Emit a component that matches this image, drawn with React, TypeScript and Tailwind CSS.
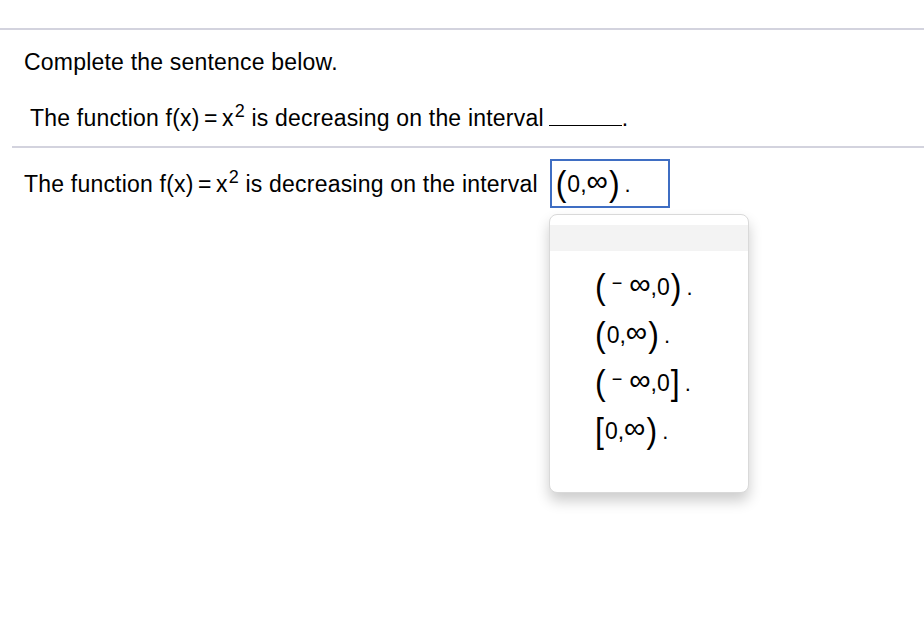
import React from 'react'

function Interval({ left, right, neg }: { left: string; right: string; neg?: boolean }) {
  const zero = <span className="text-[23px] leading-none inline-block">0</span>
  const comma = <span className="text-[23px] leading-none inline-block">,</span>
  const inf = <span className="text-[30px] leading-none inline-block -translate-y-[1px] tracking-normal">∞</span>
  return (
    <span className="inline-flex items-center text-black tracking-normal" style={{ fontFamily: '"Liberation Sans", Arial, sans-serif' }}>
      <span className="text-[32px] font-light leading-none scale-y-110 inline-block">{left}</span>
      {neg && <span className="text-[18px] leading-none -translate-y-[4px] ml-[6px] mr-[6px] inline-block">−</span>}
      <span className="inline-flex items-baseline -translate-y-[2px] ml-[1px]">
        {neg ? (
          <>
            {inf}
            {comma}
            {zero}
          </>
        ) : (
          <>
            {zero}
            {comma}
            {inf}
          </>
        )}
      </span>
      <span className="text-[32px] font-light leading-none scale-y-110 inline-block ml-[1px]">{right}</span>
      <span className="text-[22px] leading-none ml-[5px] translate-y-[1px] inline-block">.</span>
    </span>
  )
}

function Sentence() {
  return (
    <span>
      The function f(x)<span className="tracking-[-2px]"> </span>=<span className="tracking-[-2px]"> </span>x
      <sup className="text-[18px] relative -top-[9px] ml-[1px]">2</sup> is decreasing on the interval
    </span>
  )
}

export default function App() {
  return (
    <div className="relative w-[924px] h-[618px] bg-white text-black tracking-[0.2px]" style={{ fontFamily: '"Liberation Sans", Arial, sans-serif' }}>
      <div className="h-[28px]" />
      <div className="border-t-2 border-[#d3d3de]" />

      <div className="pl-[24px] pt-[19px] text-[23px] leading-[26px]">Complete the sentence below.</div>

      <div className="pl-[30px] pt-[30px] text-[23px] leading-[26px] flex items-baseline">
        <Sentence />
        <span className="ml-[5px] w-[73px] border-b-[1.5px] border-black self-end mb-[5px]" />
        <span>.</span>
      </div>

      <div className="ml-[12px] mt-[15px] border-t-2 border-[#d3d3de]" />

      <div className="pl-[24px] pt-[11px] flex items-center text-[23px] leading-[26px]">
        <Sentence />
        <div className="ml-[12px] w-[120px] h-[49px] border-2 border-[#3f6ec3] flex items-center pl-[4px]">
          <Interval left="(" right=")" />
        </div>
      </div>

      {/* dropdown menu */}
      <div className="absolute left-[549px] top-[214px] w-[200px] h-[279px] bg-white border border-[#d9d9d9] rounded-[8px] shadow-[0_8px_14px_rgba(0,0,0,0.2)] pt-[10px]">
        <div className="h-[26px] bg-[#f3f3f3]" />
        <div className="flex flex-col pl-[45px] pt-[12px]">
          <div className="h-[48px] flex items-center"><Interval left="(" right=")" neg /></div>
          <div className="h-[48px] flex items-center"><Interval left="(" right=")" /></div>
          <div className="h-[48px] flex items-center"><Interval left="(" right="]" neg /></div>
          <div className="h-[48px] flex items-center"><Interval left="[" right=")" /></div>
        </div>
      </div>
    </div>
  )
}
